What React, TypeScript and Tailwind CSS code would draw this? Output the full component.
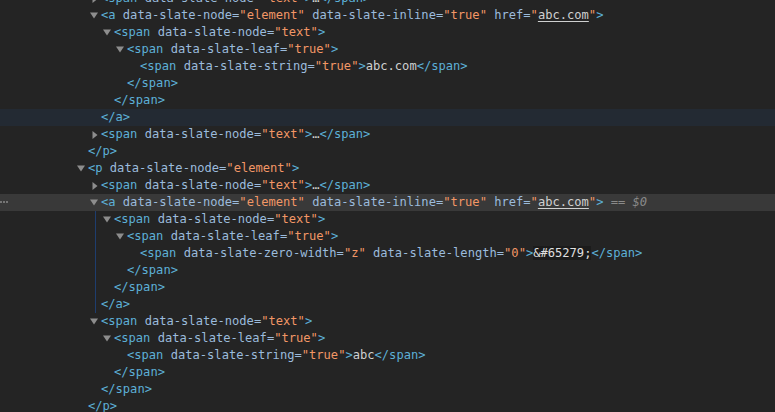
import type { ReactNode } from "react";

/* Dark DevTools elements tree — a Slate editor's DOM with the inline <a> selected. */

type Attr = [string, string, boolean?];

type Row = {
  lvl: number;
  arrow?: "down" | "right";
  content: ReactNode;
  state?: "hover" | "selected";
  guide?: boolean;
};

const indent: Record<number, string> = {
  0: "pl-[74px]",
  1: "pl-[87px]",
  2: "pl-[100px]",
  3: "pl-[113px]",
  4: "pl-[126px]",
};

function Attrs({ attrs }: { attrs: Attr[] }) {
  return (
    <>
      {attrs.map(([name, value, link]) => (
        <span key={name}>
          <span className="text-[#9bbbdc]">{` ${name}=`}</span>
          <span className="text-[#f29766]">"</span>
          {link ? (
            <span className="text-[#cfd0d0] underline underline-offset-2">{value}</span>
          ) : (
            <span className="text-[#f29766]">{value}</span>
          )}
          <span className="text-[#f29766]">"</span>
        </span>
      ))}
    </>
  );
}

function Open({ name, attrs = [] }: { name: string; attrs?: Attr[] }) {
  return (
    <>
      <span className="text-[#5db0d7]">{`<${name}`}</span>
      <Attrs attrs={attrs} />
      <span className="text-[#5db0d7]">{">"}</span>
    </>
  );
}

function Close({ name }: { name: string }) {
  return <span className="text-[#5db0d7]">{`</${name}>`}</span>;
}

function Inline({ name, attrs, text, entity }: { name: string; attrs: Attr[]; text: string; entity?: boolean }) {
  return (
    <>
      <Open name={name} attrs={attrs} />
      <span className={entity ? "bg-[#1b1b1b] text-[#e0e0e0]" : "text-[#cfd0d0]"}>{text}</span>
      <Close name={name} />
    </>
  );
}

const textNode: Attr[] = [["data-slate-node", "text"]];
const leaf: Attr[] = [["data-slate-leaf", "true"]];
const link: Attr[] = [
  ["data-slate-node", "element"],
  ["data-slate-inline", "true"],
  ["href", "abc.com", true],
];

const rows: Row[] = [
  { lvl: 1, arrow: "right", content: <Inline name="span" attrs={textNode} text="…" /> },
  { lvl: 1, arrow: "down", content: <Open name="a" attrs={link} /> },
  { lvl: 2, arrow: "down", content: <Open name="span" attrs={textNode} /> },
  { lvl: 3, arrow: "down", content: <Open name="span" attrs={leaf} /> },
  { lvl: 4, content: <Inline name="span" attrs={[["data-slate-string", "true"]]} text="abc.com" /> },
  { lvl: 3, content: <Close name="span" /> },
  { lvl: 2, content: <Close name="span" /> },
  { lvl: 1, content: <Close name="a" />, state: "hover" },
  { lvl: 1, arrow: "right", content: <Inline name="span" attrs={textNode} text="…" /> },
  { lvl: 0, content: <Close name="p" /> },
  { lvl: 0, arrow: "down", content: <Open name="p" attrs={[["data-slate-node", "element"]]} /> },
  { lvl: 1, arrow: "right", content: <Inline name="span" attrs={textNode} text="…" /> },
  {
    lvl: 1,
    arrow: "down",
    state: "selected",
    content: (
      <>
        <Open name="a" attrs={link} />
        <span className="text-[#8a8a8a]">{" == "}</span>
        <span className="italic text-[#8a8a8a]">$0</span>
      </>
    ),
  },
  { lvl: 2, arrow: "down", guide: true, content: <Open name="span" attrs={textNode} /> },
  { lvl: 3, arrow: "down", guide: true, content: <Open name="span" attrs={leaf} /> },
  {
    lvl: 4,
    guide: true,
    content: (
      <Inline
        name="span"
        attrs={[
          ["data-slate-zero-width", "z"],
          ["data-slate-length", "0"],
        ]}
        text={"&#65279;"}
        entity
      />
    ),
  },
  { lvl: 3, guide: true, content: <Close name="span" /> },
  { lvl: 2, guide: true, content: <Close name="span" /> },
  { lvl: 1, guide: true, content: <Close name="a" /> },
  { lvl: 1, arrow: "down", content: <Open name="span" attrs={textNode} /> },
  { lvl: 2, arrow: "down", content: <Open name="span" attrs={leaf} /> },
  { lvl: 3, content: <Inline name="span" attrs={[["data-slate-string", "true"]]} text="abc" /> },
  { lvl: 2, content: <Close name="span" /> },
  { lvl: 1, content: <Close name="span" /> },
  { lvl: 0, content: <Close name="p" /> },
];

function Arrow({ dir }: { dir?: "down" | "right" }) {
  if (!dir) return <span className="w-[14px] flex-none" />;
  return (
    <span className="flex w-[14px] flex-none items-center">
      {dir === "down" ? (
        <svg viewBox="0 0 8 7" className="ml-[3px] h-[7px] w-[8px]">
          <path d="M0 0.5h8L4 6.5z" fill="#8d8d8d" />
        </svg>
      ) : (
        <svg viewBox="0 0 6 8" className="ml-[5px] h-[8px] w-[6px]">
          <path d="M0.5 0v8L5.5 4z" fill="#8d8d8d" />
        </svg>
      )}
    </span>
  );
}

function TreeRow({ row }: { row: Row }) {
  const bg =
    row.state === "selected" ? "bg-[#393939]" : row.state === "hover" ? "bg-[#232a33]" : "";
  return (
    <div className={`relative flex h-[17px] items-center whitespace-pre ${indent[row.lvl]} ${bg}`}>
      {row.state === "selected" && (
        <svg viewBox="0 0 8 2" className="absolute left-0 top-[7px] h-[2px] w-[8px]">
          <circle cx="1" cy="1" r="1" fill="#8a8a8a" />
          <circle cx="4" cy="1" r="1" fill="#8a8a8a" />
          <circle cx="7" cy="1" r="1" fill="#8a8a8a" />
        </svg>
      )}
      {row.guide && <span className="absolute left-[95px] top-0 h-full w-px bg-[#1e3d6e]" />}
      <Arrow dir={row.arrow} />
      <span>{row.content}</span>
    </div>
  );
}

export default function App() {
  return (
    <div className="h-[412px] w-full overflow-hidden bg-[#242424] font-['DejaVu_Sans_Mono',monospace] text-[12.1px] leading-[17px]">
      <div className="-mt-[10px]">
        {rows.map((row, n) => (
          <TreeRow key={n} row={row} />
        ))}
      </div>
    </div>
  );
}
